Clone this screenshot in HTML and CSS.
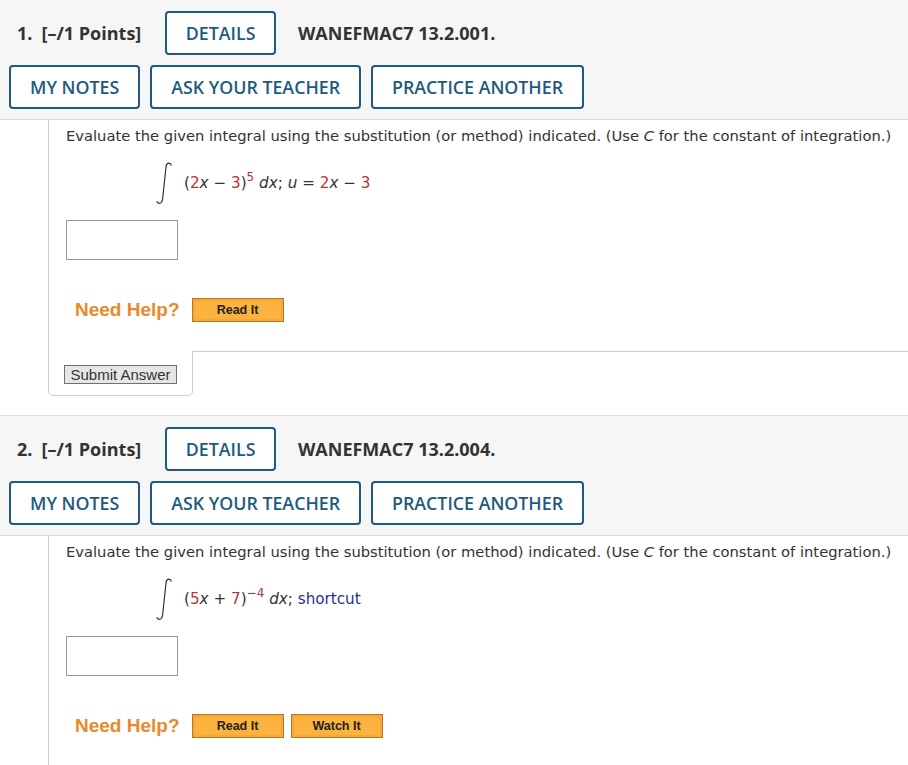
FILE: index.html
```html
<!DOCTYPE html>
<html>
<head>
<meta charset="utf-8">
<link rel="stylesheet" href="styles.css">
</head>
<body>
<div class="question first">
  <div class="qhead">
    <div class="row1">
      <span class="qnum">1.</span>
      <span class="pts">[–/1 Points]</span>
      <button class="btn">DETAILS</button>
      <span class="qid">WANEFMAC7 13.2.001.</span>
    </div>
    <div class="row2">
      <button class="btn">MY NOTES</button>
      <button class="btn">ASK YOUR TEACHER</button>
      <button class="btn">PRACTICE ANOTHER</button>
    </div>
  </div>
  <div class="qbody">
    <div class="qcontent">
      <p class="prompt">Evaluate the given integral using the substitution (or method) indicated. (Use <i>C</i> for the constant of integration.)</p>
      <div class="integral">
        <svg class="intsign" width="18" height="44" viewBox="0 0 18 44"><path d="M16.5 4.5 C15.5 1.2 11.5 1 11 6 L7.6 38 C7.1 43 3 43.5 1.6 40.2" fill="none" stroke="#333" stroke-width="1.2"/></svg>
        <span class="expr">(<span class="r">2</span><i>x</i> − <span class="r">3</span>)<sup class="r">5</sup> <i>dx</i>; <i>u</i> = <span class="r">2</span><i>x</i> − <span class="r">3</span></span>
      </div>
      <div class="answer"></div>
      <div class="help">
        <span class="needhelp">Need Help?</span>
        <button class="hbtn">Read It</button>
      </div>
    </div>
    <div class="submitrow">
      <div class="tab"><button class="submit">Submit Answer</button></div>
      <div class="filler"></div>
    </div>
  </div>
</div>

<div class="question second">
  <div class="qhead">
    <div class="row1">
      <span class="qnum">2.</span>
      <span class="pts">[–/1 Points]</span>
      <button class="btn">DETAILS</button>
      <span class="qid">WANEFMAC7 13.2.004.</span>
    </div>
    <div class="row2">
      <button class="btn">MY NOTES</button>
      <button class="btn">ASK YOUR TEACHER</button>
      <button class="btn">PRACTICE ANOTHER</button>
    </div>
  </div>
  <div class="qbody">
    <div class="qcontent">
      <p class="prompt">Evaluate the given integral using the substitution (or method) indicated. (Use <i>C</i> for the constant of integration.)</p>
      <div class="integral">
        <svg class="intsign" width="18" height="44" viewBox="0 0 18 44"><path d="M16.5 4.5 C15.5 1.2 11.5 1 11 6 L7.6 38 C7.1 43 3 43.5 1.6 40.2" fill="none" stroke="#333" stroke-width="1.2"/></svg>
        <span class="expr">(<span class="r">5</span><i>x</i> + <span class="r">7</span>)<sup class="r">−4</sup> <i>dx</i>; <span class="blue">shortcut</span></span>
      </div>
      <div class="answer"></div>
      <div class="help">
        <span class="needhelp">Need Help?</span>
        <button class="hbtn">Read It</button>
        <button class="hbtn">Watch It</button>
      </div>
    </div>
  </div>
</div>
</body>
</html>
```

FILE: styles.css
```css
* { box-sizing: border-box; }
html, body { margin: 0; padding: 0; background: #fff; }
body { width: 908px; overflow: hidden; }

.question.second { margin-top: 19px; border-top: 1px solid #dcdcdc; }

.qhead {
  background: #f6f6f6;
  border-bottom: 1px solid #dcdcdc;
  padding: 11px 0 10px 0;
  font-family: "Open Sans", sans-serif;
}
.row1 {
  display: flex;
  align-items: center;
  padding-left: 17px;
  height: 44px;
}
.qnum, .pts, .qid {
  font-weight: 700;
  font-size: 18px;
  color: #333;
}
.qnum { margin-right: 9px; }
.pts { margin-right: 24px; }
.qid { margin-left: 22px; }
.row2 {
  display: flex;
  gap: 10px;
  padding-left: 9px;
  margin-top: 10px;
}
.btn {
  height: 44px;
  border: 2px solid #1e5a80;
  border-radius: 4px;
  background: #fff;
  color: #1e5a80;
  font-family: "Open Sans", sans-serif;
  font-weight: 600;
  font-size: 17.8px;
  padding: 0 19px;
  margin: 0;
}
.row1 .btn { padding: 0 18.5px; }

.qbody { background: #fff; }
.qcontent {
  margin-left: 48px;
  border-left: 1px solid #cccccc;
  padding: 6px 0 29px 17px;
  font-family: "DejaVu Sans", Verdana, sans-serif;
  color: #333;
}
.prompt {
  margin: 0;
  font-size: 14.72px;
  line-height: 20px;
  white-space: nowrap;
}
.integral {
  display: flex;
  align-items: center;
  margin: 15px 0 0 89px;
  height: 44px;
}
.intsign { display: block; }
.expr {
  margin-left: 11px;
  font-size: 15.2px;
  color: #333;
}
.expr sup { font-size: 12px; vertical-align: 7px; line-height: 0; }
.r { color: #b8323b; }
.blue { color: #1f3293; }
.answer {
  margin-top: 15px;
  width: 112px;
  height: 40px;
  border: 1px solid #9a9a9a;
  background: #fff;
}
.help {
  display: flex;
  align-items: center;
  margin: 38px 0 0 9px;
  height: 24px;
  gap: 7px;
}
.needhelp {
  font-family: "Liberation Sans", Arial, sans-serif;
  font-weight: 700;
  font-size: 19px;
  color: #e8892b;
  margin-right: 5px;
}
.hbtn {
  width: 92px;
  height: 24px;
  margin: 0;
  padding: 0;
  border: 1px solid #b97520;
  box-shadow: inset 0 0 0 2px #f7a736;
  background: #fbb23f;
  font-family: "Liberation Sans", Arial, sans-serif;
  font-weight: 700;
  font-size: 12.5px;
  color: #222;
}

.submitrow { display: flex; }
.tab {
  margin-left: 48px;
  width: 145px;
  border: 1px solid #cccccc;
  border-top: none;
  border-radius: 0 0 5px 5px;
  padding: 14px 15px 11px 15px;
}
.submit {
  display: block;
  width: 113px;
  height: 19px;
  margin: 0;
  padding: 0;
  border: 1px solid #707070;
  background: #e6e6e6;
  font-family: "Liberation Sans", Arial, sans-serif;
  font-size: 15px;
  line-height: 16px;
  color: #333;
}
.filler { flex: 1; border-top: 1px solid #cccccc; }
```
